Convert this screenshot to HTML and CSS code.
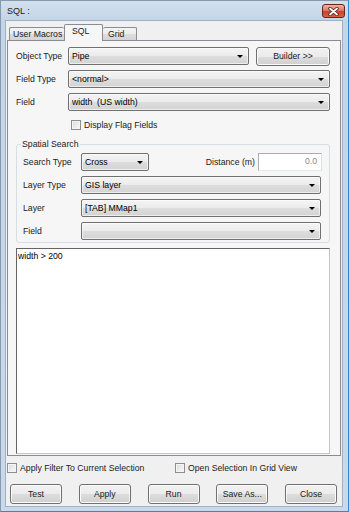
FILE: index.html
```html
<!DOCTYPE html>
<html>
<head>
<meta charset="utf-8">
<link rel="stylesheet" href="styles.css">
</head>
<body>
<div class="window">
  <div class="titlebar">
    <span class="title">SQL :</span>
    <div class="close">
      <svg width="13" height="9" viewBox="0 0 13 9">
        <path d="M3 1.5 L10 7.5 M10 1.5 L3 7.5" stroke="#5a1a10" stroke-width="3.4" stroke-linecap="round"/>
        <path d="M3 1.5 L10 7.5 M10 1.5 L3 7.5" stroke="#ffffff" stroke-width="1.8" stroke-linecap="round"/>
      </svg>
    </div>
  </div>
  <div class="client">
    <div class="tabs">
      <div class="tab tab-macros">User Macros</div>
      <div class="tab tab-sql active">SQL</div>
      <div class="tab tab-grid">Grid</div>
    </div>
    <div class="panel">
      <div class="row">
        <span class="label">Object Type</span>
        <div class="combo combo-obj"><span class="ctext">Pipe</span><span class="arrow"></span></div>
        <div class="btn btn-builder">Builder &gt;&gt;</div>
      </div>
      <div class="row">
        <span class="label">Field Type</span>
        <div class="combo"><span class="ctext">&lt;normal&gt;</span><span class="arrow"></span></div>
      </div>
      <div class="row">
        <span class="label">Field</span>
        <div class="combo"><span class="ctext">width&nbsp; (US width)</span><span class="arrow"></span></div>
      </div>
      <div class="flagrow">
        <span class="checkbox"></span><span>Display Flag Fields</span>
      </div>
      <fieldset class="group">
        <legend>Spatial Search</legend>
        <div class="row">
          <span class="label glabel">Search Type</span>
          <div class="combo combo-search"><span class="ctext">Cross</span><span class="arrow"></span></div>
          <span class="dlabel">Distance (m)</span>
          <div class="textbox">0.0</div>
        </div>
        <div class="row">
          <span class="label glabel">Layer Type</span>
          <div class="combo"><span class="ctext">GIS layer</span><span class="arrow"></span></div>
        </div>
        <div class="row">
          <span class="label glabel">Layer</span>
          <div class="combo"><span class="ctext">[TAB] MMap1</span><span class="arrow"></span></div>
        </div>
        <div class="row last">
          <span class="label glabel">Field</span>
          <div class="combo"><span class="ctext"></span><span class="arrow"></span></div>
        </div>
      </fieldset>
      <div class="sqltext">width &gt; 200</div>
    </div>
    <div class="checks">
      <div class="check check-first"><span class="checkbox"></span><span>Apply Filter To Current Selection</span></div>
      <div class="check"><span class="checkbox"></span><span>Open Selection In Grid View</span></div>
    </div>
    <div class="buttons">
      <div class="btn">Test</div>
      <div class="btn">Apply</div>
      <div class="btn">Run</div>
      <div class="btn">Save As...</div>
      <div class="btn">Close</div>
    </div>
  </div>
</div>
</body>
</html>
```

FILE: styles.css
```css
* { box-sizing: border-box; }
body {
  margin: 0;
  font-family: "Liberation Sans", Arial, sans-serif;
  font-size: 8.7px;
  color: #000;
}
.window {
  width: 349px;
  height: 512px;
  display: flex;
  flex-direction: column;
  background: linear-gradient(#d2e0ee, #c3d5e8 20px, #c9d9ea);
  border: 1px solid #8799ad;
  border-right-color: #2c8ad2;
  border-bottom-color: #2c8ad2;
  padding: 0 5px 4px 4px;
}
.titlebar {
  height: 19px;
  display: flex;
  align-items: center;
  justify-content: space-between;
}
.title {
  padding-left: 2px;
  font-size: 9px;
  color: #1a1a1a;
}
.close {
  width: 23px;
  height: 14px;
  margin-right: -2px;
  margin-top: 1px;
  border: 1px solid #6e2418;
  border-radius: 3px;
  background: linear-gradient(#ecb3a6, #dc7c68 45%, #c8422c 55%, #d8624a);
  display: flex;
  align-items: center;
  justify-content: center;
}
.client {
  flex: 1;
  background: #f0f0f0;
  border: 1px solid #9fb0c2;
  display: flex;
  flex-direction: column;
}
.tabs {
  height: 19px;
  display: flex;
  align-items: flex-end;
  padding-left: 3px;
}
.tab {
  height: 13px;
  border: 1px solid #898c95;
  border-bottom: none;
  border-radius: 2px 2px 0 0;
  background: linear-gradient(#f4f4f4, #ebebeb 50%, #dddddd 50%, #d4d4d4);
  line-height: 12px;
  white-space: nowrap;
  color: #1a1a1a;
}
.tab-macros { width: 55px; padding-left: 3px; border-right: none; }
.tab-sql { width: 39px; padding-left: 7px; }
.tab-grid { width: 34px; padding-left: 5px; border-left: none; }
.tab.active {
  height: 17px;
  margin-bottom: -1px;
  background: #f6f6f6;
  position: relative;
  line-height: 13px;
}
.panel {
  margin: 0 1px;
  height: 416px;
  border: 1px solid #898c95;
  background: #f6f6f6;
  padding: 6px 10px 0 8px;
}
.row {
  display: flex;
  align-items: center;
  height: 18px;
  margin-bottom: 5px;
}
.row.last { margin-bottom: 0; }
.label {
  width: 52px;
  flex: none;
  color: #1a1a1a;
}
.glabel { width: 58px; }
.combo {
  flex: 1;
  height: 18px;
  border: 1px solid #707070;
  border-radius: 2px;
  background: linear-gradient(#f4f4f4, #ebebeb 50%, #dddddd 50%, #d3d3d3);
  display: flex;
  align-items: center;
  padding: 0 5px 0 3px;
  box-shadow: inset 0 0 0 1px rgba(255,255,255,0.6);
}
.ctext { flex: 1; white-space: nowrap; }
.arrow {
  width: 0;
  height: 0;
  border-left: 3px solid transparent;
  border-right: 3px solid transparent;
  border-top: 3px solid #000;
  margin-top: 1px;
}
.combo-obj { flex: none; width: 181px; }
.combo-search { flex: none; width: 68px; }
.btn {
  height: 20px;
  width: 52px;
  border: 1px solid #707070;
  border-radius: 3px;
  background: linear-gradient(#f2f2f2, #ebebeb 50%, #dddddd 50%, #cfcfcf);
  box-shadow: inset 0 0 0 1px #fbfbfb;
  display: flex;
  align-items: center;
  justify-content: center;
  color: #1a1a1a;
}
.btn-builder {
  width: 74px;
  height: 19px;
  margin-left: 7px;
}
.flagrow {
  display: flex;
  align-items: center;
  gap: 3px;
  height: 10px;
  margin: 9px 0 0 55px;
  color: #1a1a1a;
}
.checkbox {
  width: 10px;
  height: 10px;
  flex: none;
  border: 1px solid #8f8f8f;
  background: linear-gradient(135deg, #dcdcdc, #f8f8f8);
  box-shadow: inset 0 0 0 1px #f4f4f4;
}
.group {
  margin: 9px 0 0 0;
  padding: 4px 8px 2px 6px;
  border: 1px solid #d5dfe5;
  border-radius: 3px;
  min-width: 0;
}
.group legend {
  padding: 0 1px;
  margin-left: -2px;
  line-height: 10px;
  color: #1a1a1a;
}
.dlabel {
  flex: 1;
  text-align: right;
  padding-right: 3px;
  color: #1a1a1a;
}
.textbox {
  width: 64px;
  height: 18px;
  border: 1px solid #abadb3;
  border-right-color: #dbdfe6;
  border-bottom-color: #e3e9ef;
  background: #fff;
  color: #888;
  text-align: right;
  padding-right: 4px;
  line-height: 15px;
  margin-right: -1px;
}
.sqltext {
  margin-top: 5px;
  height: 206px;
  width: 314px;
  border: 1px solid #646464;
  border-right-color: #c4c4c4;
  border-bottom-color: #c4c4c4;
  background: #fff;
  padding: 2px 1px;
  line-height: 11px;
}
.checks {
  display: flex;
  margin-top: 7px;
  height: 10px;
  padding-left: 1px;
  color: #1a1a1a;
}
.check {
  display: flex;
  align-items: center;
  gap: 3px;
}
.check-first { width: 168px; }
.buttons {
  display: flex;
  justify-content: space-between;
  margin-top: 11px;
  padding: 0 5px 0 4px;
}
```
